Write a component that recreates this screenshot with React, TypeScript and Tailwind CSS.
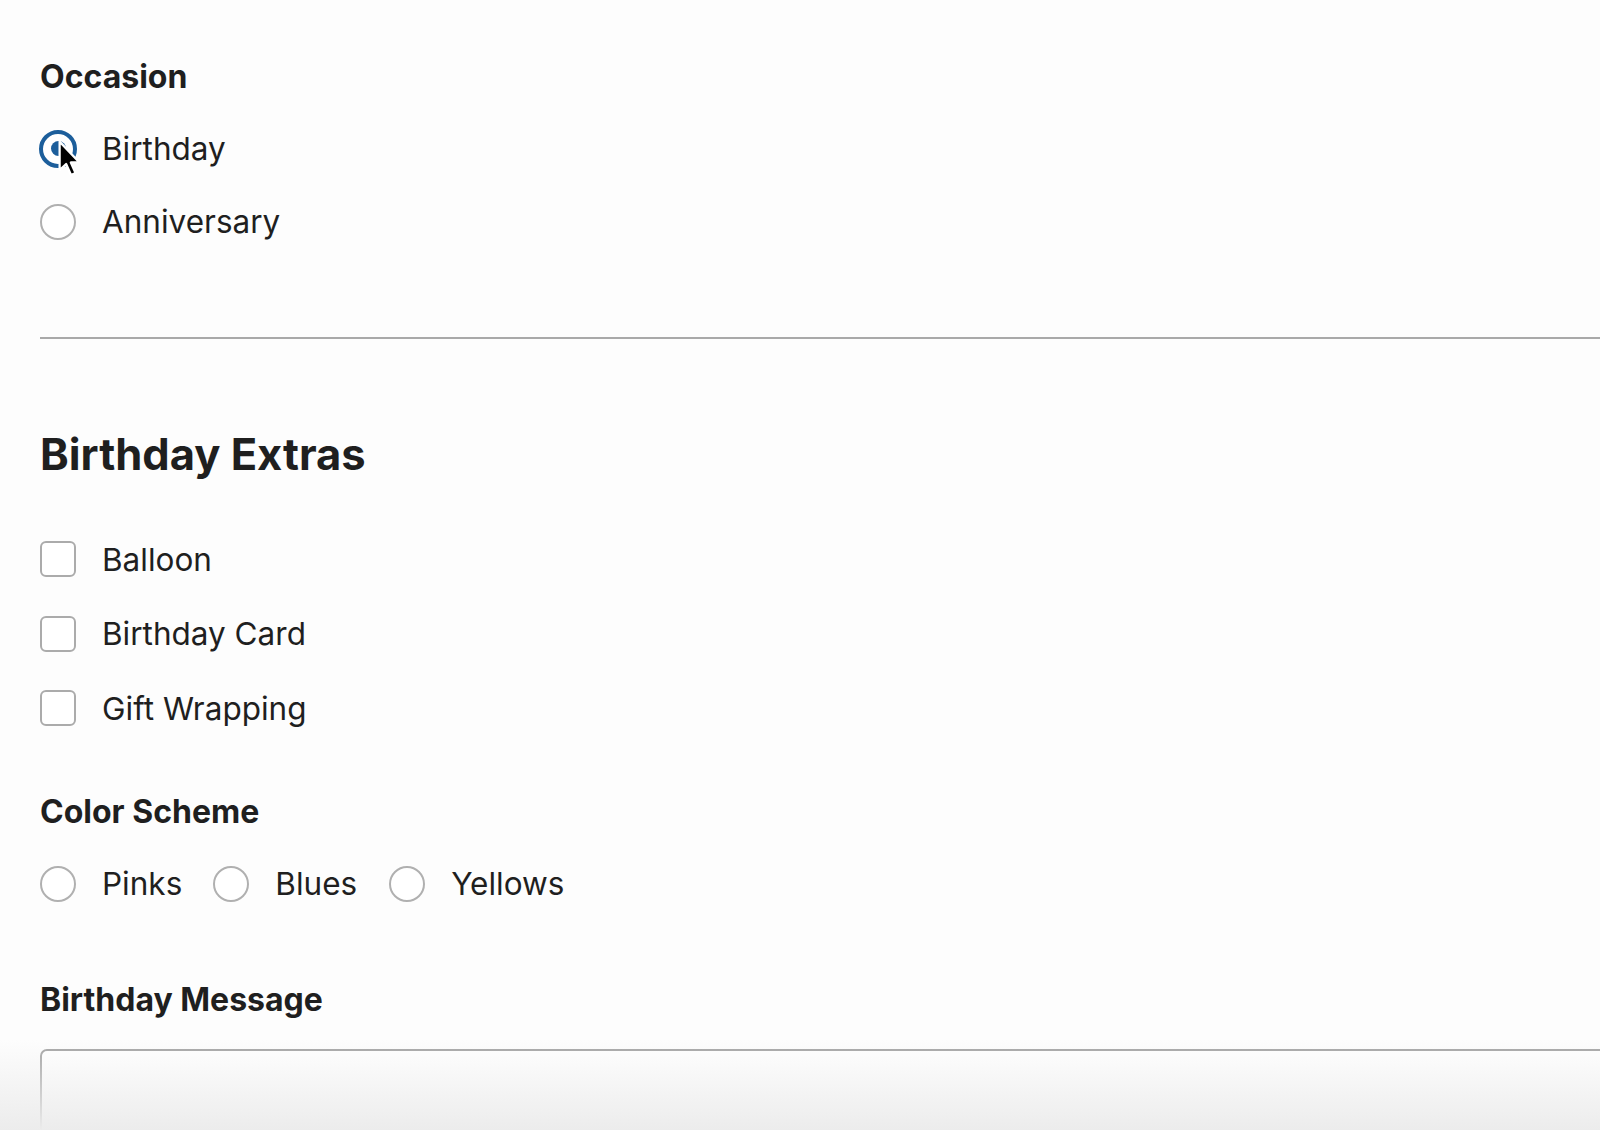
import React from "react";

function Radio({ checked = false, className = "" }: { checked?: boolean; className?: string }) {
  if (checked) {
    return (
      <span
        className={
          "flex h-[38px] w-[38px] shrink-0 items-center justify-center rounded-full border-[4px] border-[#1c5e9b] bg-white " +
          className
        }
      >
        <span className="h-[15px] w-[15px] rounded-full bg-[#1c5e9b]" />
      </span>
    );
  }
  return (
    <span
      className={
        "block h-[36px] w-[36px] shrink-0 rounded-full border-2 border-[#b0b0b0] bg-white " + className
      }
    />
  );
}

function Checkbox() {
  return (
    <span className="block h-[36px] w-[36px] shrink-0 rounded-[6px] border-2 border-[#ababab] bg-white" />
  );
}

function Cursor() {
  return (
    <svg
      className="pointer-events-none absolute left-[58px] top-[140px]"
      width="26"
      height="39"
      viewBox="0 0 16 24"
    >
      <path
        d="M1 1 L1 18.5 L5 14.8 L8 21.5 L10.8 20.3 L7.9 13.8 L13.2 13.8 Z"
        fill="#000"
        stroke="#fff"
        strokeWidth="1.4"
        strokeLinejoin="round"
      />
    </svg>
  );
}

const extras = ["Balloon", "Birthday Card", "Gift Wrapping"];

export default function App() {
  return (
    <div
      className="relative h-[1130px] w-full overflow-hidden bg-[#fdfdfd] text-[#1f1f1f]"
      style={{ fontFamily: "Inter, 'Noto Sans', 'Liberation Sans', sans-serif" }}
    >
      <div className="flex flex-col pl-[40px]">
        <div className="mt-[57px] h-[40px] text-[32px] font-bold leading-[40px]">
          Occasion
        </div>

        <div className="mt-[15px] flex h-[73px] items-center">
          <Radio checked className="ml-[-1px]" />
          <span className="ml-[25px] text-[31.5px] leading-none">Birthday</span>
        </div>
        <div className="flex h-[73px] items-center">
          <Radio />
          <span className="ml-[26px] text-[31.5px] leading-none">Anniversary</span>
        </div>

        <div className="mt-[79px] h-[2px] w-full bg-[#a9a9a9]" />

        <div className="mt-[87px] h-[56px] text-[43.5px] font-bold leading-[56px]">
          Birthday Extras
        </div>

        <div className="mt-[40px] flex flex-col">
          {extras.map((label) => (
            <div key={label} className="flex h-[74.5px] items-center">
              <Checkbox />
              <span className="ml-[26px] text-[31.5px] leading-none">{label}</span>
            </div>
          ))}
        </div>

        <div className="mt-[46px] h-[40px] text-[32px] font-bold leading-[40px]">
          Color Scheme
        </div>

        <div className="mt-[16px] flex h-[73px] items-center">
          <Radio />
          <span className="ml-[26px] text-[31.5px] leading-none">Pinks</span>
          <Radio className="ml-[31px]" />
          <span className="ml-[26px] text-[31.5px] leading-none">Blues</span>
          <Radio className="ml-[32px]" />
          <span className="ml-[26px] text-[31.5px] leading-none">Yellows</span>
        </div>

        <div className="mt-[59px] h-[40px] text-[32px] font-bold leading-[40px]">
          Birthday Message
        </div>

        <textarea className="mt-[29px] h-[200px] w-[calc(100%+20px)] resize-none rounded-[7px] border-2 border-[#a3a3a3] bg-white outline-none" />
      </div>

      <Cursor />

      <div className="pointer-events-none absolute bottom-0 left-0 h-[90px] w-full bg-gradient-to-b from-transparent to-[#ececec]" />
    </div>
  );
}
